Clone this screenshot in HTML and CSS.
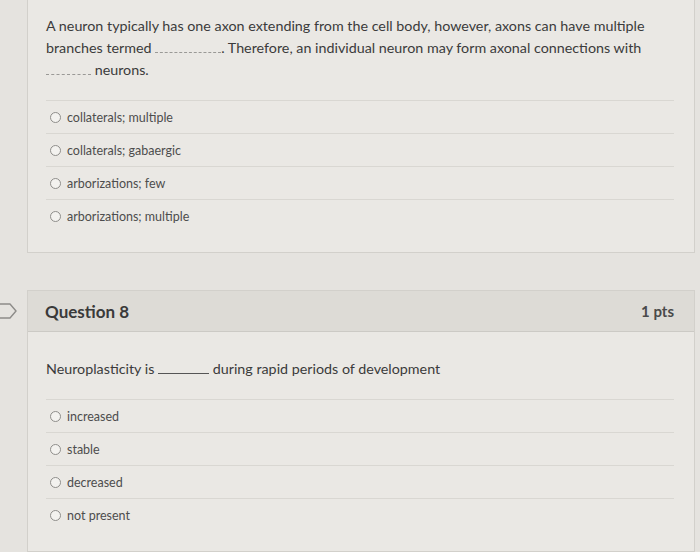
FILE: index.html
```html
<!DOCTYPE html>
<html lang="en">
<head>
<meta charset="UTF-8">
<title>Quiz</title>
<link rel="stylesheet" href="styles.css">
</head>
<body>

<div class="quiz">
  <div class="question-row">
    <div class="gutter"></div>
    <div class="question top-cut">
      <div class="question-text">
        <p class="line">A neuron typically has one axon extending from the cell body, however, axons can have multiple</p>
        <p class="line">branches termed <span class="blank light long"></span>. Therefore, an individual neuron may form axonal connections with</p>
        <p class="line"><span class="blank light short"></span> neurons.</p>
      </div>
      <ul class="answers">
        <li><span class="radio"></span>collaterals; multiple</li>
        <li><span class="radio"></span>collaterals; gabaergic</li>
        <li><span class="radio"></span>arborizations; few</li>
        <li><span class="radio"></span>arborizations; multiple</li>
      </ul>
    </div>
  </div>

  <div class="question-row">
    <div class="gutter">
      <svg class="flag" width="18" height="18" viewBox="0 0 18 18">
        <path d="M-3 2 H10 L16 9 L10 16 H-3" fill="none" stroke="#8d8c89" stroke-width="1.4" stroke-linejoin="round"/>
      </svg>
    </div>
    <div class="question">
      <div class="question-header">
        <span class="question-title">Question 8</span>
        <span class="points">1 pts</span>
      </div>
      <div class="question-text spaced">
        Neuroplasticity is <span class="blank"></span> during rapid periods of development
      </div>
      <ul class="answers">
        <li><span class="radio"></span>increased</li>
        <li><span class="radio"></span>stable</li>
        <li><span class="radio"></span>decreased</li>
        <li><span class="radio"></span>not present</li>
      </ul>
    </div>
  </div>
</div>

</body>
</html>
```

FILE: styles.css
```css
body {
  margin: 0;
  background: #e5e3df;
  font-family: Lato, "Open Sans", sans-serif;
  color: #3b3b3b;
}

.quiz {
  padding-right: 5px;
}

.question-row {
  display: flex;
  margin-bottom: 37px;
}

.gutter {
  width: 27px;
  flex: 0 0 27px;
  padding-top: 12px;
}

.flag {
  display: block;
}

.question {
  flex: 1;
  background: #eae8e4;
  border: 1px solid #d2d0cb;
}

.question.top-cut {
  border-top: none;
}

.question-header {
  display: flex;
  justify-content: space-between;
  align-items: center;
  height: 40px;
  padding: 0 20px 0 17px;
  background: #dddbd6;
  border-bottom: 1px solid #cccac5;
  font-weight: bold;
  color: #3a3a3a;
}

.question-title {
  font-size: 17px;
}

.points {
  font-size: 15px;
  color: #4a4a4a;
}

.question-text {
  padding: 15px 20px 0 18px;
  font-size: 14.3px;
  line-height: 22px;
}

.question-text.spaced {
  padding-top: 26px;
}

.line {
  margin: 0;
}

/* fill-in blanks */
.blank {
  display: inline-block;
  width: 51px;
  height: 12px;
  border-bottom: 1px solid #555;
}

.blank.light {
  border-bottom: 1px dashed #9a9996;
}

.blank.long {
  width: 66px;
}

.blank.short {
  width: 45px;
}

.answers {
  list-style: none;
  margin: 19px 20px 20px 18px;
  padding: 0;
}

.answers li {
  display: flex;
  align-items: center;
  height: 32px;
  border-top: 1px solid #d9d7d2;
  font-size: 12.5px;
  color: #4d4d4d;
}

.radio {
  width: 9px;
  height: 9px;
  margin: 0 6px 0 4px;
  border: 1px solid #8f8e8b;
  border-radius: 50%;
  background: #f3f2ef;
}
```
